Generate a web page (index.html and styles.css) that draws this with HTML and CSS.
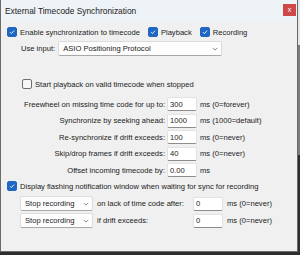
FILE: index.html
```html
<!DOCTYPE html>
<html lang="en">
<head>
    <meta charset="UTF-8">
    <title>External Timecode Synchronization</title>
    <link rel="stylesheet" href="styles.css">
</head>
<body>
    <div class="window">
        <div class="titlebar">
            <span class="title">External Timecode Synchronization</span>
            <span class="close">x</span>
        </div>

        <div class="content">
            <div class="row top">
                <label class="check"><span class="box on"><svg viewBox="0 0 9 9"><path d="M2.2 4.7 L3.8 6.3 L6.9 2.9" /></svg></span>Enable synchronization to timecode</label>
                <label class="check"><span class="box on"><svg viewBox="0 0 9 9"><path d="M2.2 4.7 L3.8 6.3 L6.9 2.9" /></svg></span>Playback</label>
                <label class="check"><span class="box on"><svg viewBox="0 0 9 9"><path d="M2.2 4.7 L3.8 6.3 L6.9 2.9" /></svg></span>Recording</label>
            </div>

            <div class="row input-row">
                <span>Use input:</span>
                <div class="combo wide"><span>ASIO Positioning Protocol</span><svg class="chev" viewBox="0 0 8 5"><path d="M1 1 L4 4 L7 1" /></svg></div>
            </div>

            <div class="row start-row">
                <label class="check"><span class="box"></span>Start playback on valid timecode when stopped</label>
            </div>

            <div class="fields">
                <span class="lbl">Freewheel on missing time code for up to:</span>
                <input class="num" type="text" value="300">
                <span>ms (0=forever)</span>

                <span class="lbl">Synchronize by seeking ahead:</span>
                <input class="num" type="text" value="1000">
                <span>ms (1000=default)</span>

                <span class="lbl">Re-synchronize if drift exceeds:</span>
                <input class="num" type="text" value="100">
                <span>ms (0=never)</span>

                <span class="lbl">Skip/drop frames if drift exceeds:</span>
                <input class="num" type="text" value="40">
                <span>ms (0=never)</span>

                <span class="lbl">Offset incoming timecode by:</span>
                <input class="num" type="text" value="0.00">
                <span>ms</span>
            </div>

            <div class="row flash-row">
                <label class="check"><span class="box on"><svg viewBox="0 0 9 9"><path d="M2.2 4.7 L3.8 6.3 L6.9 2.9" /></svg></span>Display flashing notification window when waiting for sync for recording</label>
            </div>

            <div class="actions">
                <div class="combo"><span>Stop recording</span><svg class="chev" viewBox="0 0 8 5"><path d="M1 1 L4 4 L7 1" /></svg></div>
                <span>on lack of time code after:</span>
                <input class="num" type="text" value="0">
                <span>ms (0=never)</span>

                <div class="combo"><span>Stop recording</span><svg class="chev" viewBox="0 0 8 5"><path d="M1 1 L4 4 L7 1" /></svg></div>
                <span>if drift exceeds:</span>
                <input class="num" type="text" value="0">
                <span>ms (0=never)</span>
            </div>
        </div>
    </div>
</body>
</html>
```

FILE: styles.css
```css
body {
    margin: 0;
    width: 300px;
    height: 255px;
    overflow: hidden;
    background: linear-gradient(to bottom, #e6e6e6 0, #e6e6e6 45px, #7d7d7d 45px, #7d7d7d 155px, #2e2e2e 155px);
    font-family: "Liberation Sans", Arial, sans-serif;
    font-size: 7.6px;
    color: #1b1b1b;
}
.window {
    width: 296px;
    height: 251px;
    border: 1px solid #6b6b6b;
    border-top: none;
    background-color: #f0f0f0;
    display: flex;
    flex-direction: column;
}
.titlebar {
    height: 21px;
    flex: none;
    display: flex;
    align-items: center;
    justify-content: space-between;
    padding-left: 4px;
    padding-right: 1px;
    background-color: #eef3f8;
}
.title {
    font-size: 8.4px;
    color: #222;
}
.close {
    width: 13px;
    height: 12px;
    margin-top: -2px;
    background-color: #cf4848;
    color: #fff;
    font-size: 7px;
    display: flex;
    align-items: center;
    justify-content: center;
}
.content {
    padding-left: 6px;
}
.row {
    display: flex;
    align-items: center;
}
.check {
    display: flex;
    align-items: center;
    white-space: nowrap;
}
.box {
    width: 8px;
    height: 8px;
    margin-right: 3px;
    border: 1px solid #6f6f6f;
    border-radius: 2px;
    background-color: #f7f7f7;
    flex: none;
}
.box.on {
    background-color: #1f67c2;
    border-color: #1f67c2;
}
.box svg {
    display: block;
    width: 8px;
    height: 8px;
    fill: none;
    stroke: #fff;
    stroke-width: 1;
}
.top {
    margin-top: 5px;
    height: 12px;
    gap: 8px;
}
.input-row {
    margin-top: 3px;
    height: 15px;
    padding-left: 14px;
    gap: 3px;
}
.combo {
    height: 15px;
    box-sizing: border-box;
    border: 1px solid #dcdcdc;
    border-bottom-color: #a8a8a8;
    border-radius: 2px;
    background-color: #fdfdfd;
    display: flex;
    align-items: center;
    justify-content: space-between;
    padding: 0 3px 0 4px;
}
.combo.wide {
    width: 164px;
}
.chev {
    width: 6px;
    height: 4px;
    fill: none;
    stroke: #555;
    stroke-width: 0.9;
}
.start-row {
    margin-top: 22px;
    height: 12px;
    padding-left: 15px;
}
.fields {
    margin-top: 7px;
    display: grid;
    grid-template-columns: 157px 30px auto;
    grid-auto-rows: 14px;
    row-gap: 2.5px;
    column-gap: 3px;
    align-items: center;
}
.lbl {
    text-align: right;
    white-space: nowrap;
    margin-right: -1px;
}
.num {
    width: 30px;
    height: 14px;
    box-sizing: border-box;
    margin: 0;
    padding: 0 2px;
    border: 1px solid #e2e2e2;
    border-bottom: 1px solid #8d8d8d;
    border-radius: 2px;
    background-color: #fff;
    font-family: "Liberation Sans", Arial, sans-serif;
    font-size: 7.6px;
    color: #1b1b1b;
    outline: none;
}
.flash-row {
    margin-top: 3px;
    height: 12px;
}
.actions {
    margin-top: 4px;
    padding-left: 13px;
    display: grid;
    grid-template-columns: 73px 92px 30px auto;
    grid-auto-rows: 15px;
    row-gap: 2px;
    column-gap: 4px;
    align-items: center;
}
.actions .num {
    height: 14px;
}
```
